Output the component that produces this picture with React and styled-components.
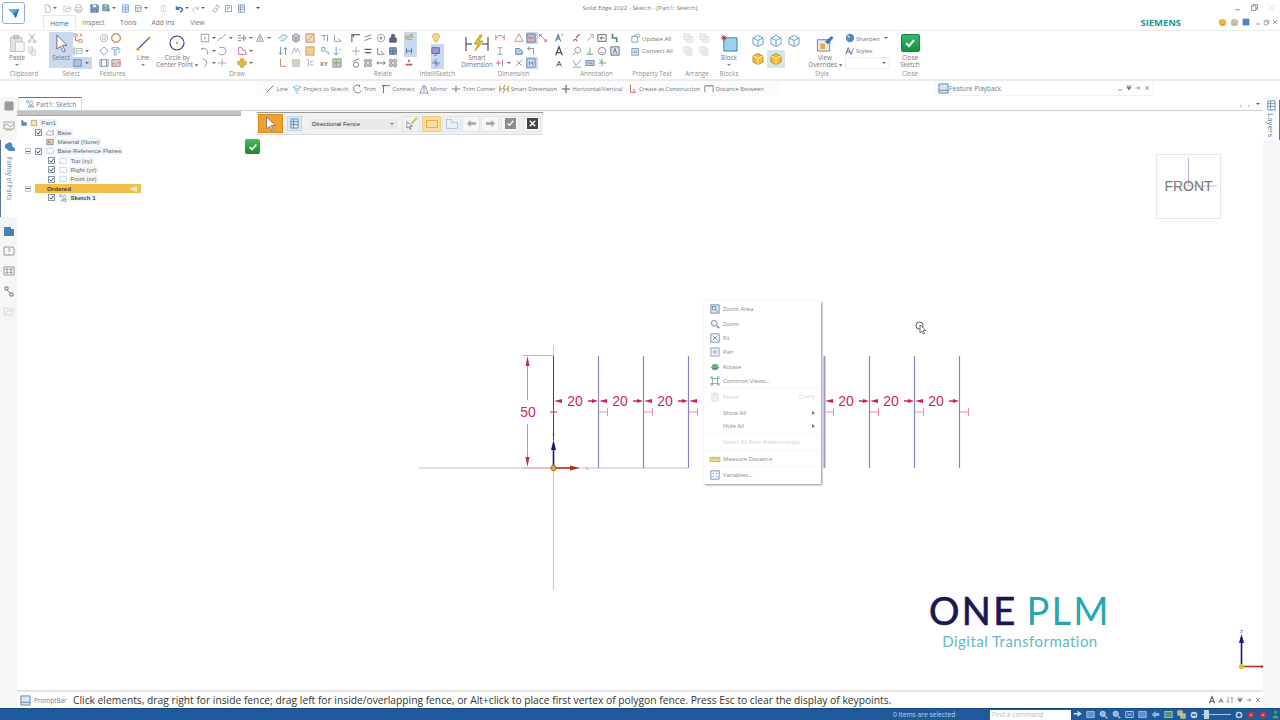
import React from "react";
import styled, { createGlobalStyle } from "styled-components";

const UI_FONT = `"Open Sans", "Liberation Sans", sans-serif`;
const PINK = "#cf1f62";

const GlobalStyle = createGlobalStyle`
  html, body { margin: 0; padding: 0; background: #fff; }
  body { font-family: ${UI_FONT}; color: #777; }
  #root { width: 1280px; height: 720px; overflow: hidden; }
`;

/* tiny CAD style icons, all on a 12x12 grid */
const GLYPHS = {
  doc: <path d="M3 1h4l3 3v7H3zM7 1v3h3" stroke="#aaa" fill="#fff" />,
  open: <path d="M1 10V3h3l1 1h5v2H4l-2 4h7l2-4" stroke="#bbb" />,
  print: <path d="M3 5V1h6v4M1 5h10v4H1zM3 8h6v3H3z" stroke="#aaa" />,
  save: <path d="M1 1h9l1 1v9H1zM3 1v4h6V1M3 11V7h6v4" stroke="#2f5d9b" fill="#6f94c6" />,
  saveas: <path d="M1 1h7l1 1v7H1zM3 1v3h4V1M7 8h4M9 6v4" stroke="#2f6d6b" fill="#7f9fc6" />,
  panel: <path d="M2 1h8v10H2zM2 4h8M2 7h8M6 4v7" stroke="#5b8fc7" fill="#dbe8f5" />,
  sheet: <path d="M2 2h7v8H2zM2 5h7M5 5v5M10 4l1 1-1 1" stroke="#6b7f96" />,
  faded: <path d="M3 2h6v8H3zM6 2v8" stroke="#ccc" />,
  undo: <path d="M2 3v4h4M2 7c2-3 6-3 8 0 0 2-1 3-3 4" stroke="#1f63ad" strokeWidth="2" />,
  redo: <path d="M10 3v4H6M10 7C8 4 4 4 2 7c0 2 1 3 3 4" stroke="#aaa" />,
  link: <path d="M2 9l4-4 3 3-4 3zM6 4l2-3 3 3-2 2" stroke="#777" />,
  note: <path d="M2 2h8v8H2zM4 8l4-4M4 5h2" stroke="#4d7fb5" />,
  table: <path d="M2 1h8v10H2zM2 4h8M2 7h8M5 1v10" stroke="#527aa5" />,
  scissors: <path d="M3 1l5 7M9 1L4 8M3 8.5a1.5 1.5 0 1 0 .1 0M9 8.5a1.5 1.5 0 1 0 .1 0" stroke="#888" />,
  copy: <path d="M2 1h5v7H2zM5 4h5v7H5z" stroke="#c4c4c4" fill="#eee" />,
  tree: <path d="M1 1h4v3H1zM7 8h4v3H7zM3 4v5h4M8 1l3 3M11 1L8 4" stroke="#c9623d" />,
  hatch: <path d="M1 2h1v8H1zM4 3h7v6H4zM4 6h7" stroke="#98a4b0" />,
  fence: <path d="M1 2h9v8H1z" stroke="#5f7795" fill="#a9bedb" />,
  ring: <><circle cx="6" cy="6" r="4.5" stroke="#aaa" /><circle cx="6" cy="6" r="2" stroke="#aaa" /></>,
  gear: <path d="M4 1h4l3 3v4l-3 3H4L1 8V4z" stroke="#b87333" strokeWidth="1.4" />,
  diamond: <path d="M6 1l5 5-5 5-5-5z" stroke="#6b8099" />,
  text: <path d="M1 2h8v2H6v7H4V4H1zM9 2l2 2-2 5" stroke="#6696bf" />,
  frame: <path d="M1 2h10v8H1zM3 2v8M9 2v8" stroke="#5a7796" />,
  photo: <path d="M1 2h10v8H1z M1 8l3-2 2 2 3-3 2 2" stroke="#b5543a" fill="#c9d7e6" />,
  rect: <path d="M1.5 1.5h9v9h-9zM6 5v2M5 6h2" stroke="#6b7f96" />,
  curve: <path d="M1 10c2-7 3-1 5-4s3-4 5-4" stroke="#6b7f96" />,
  slot: <path d="M1 6h7M1 3h4M1 9h4M8 2v8M8 4l3 2-3 2" stroke="#5b6f8a" />,
  mirror: <path d="M6 1v10M5 3L2 10h3M7 3l3 7H7" stroke="#687a8f" />,
  arcL: <path d="M2 3c5-1 8 2 7 7M2 3v2" stroke="#5c6a7a" />,
  circle: <path d="M3 2c6-2 9 2 7 6s-7 3-8 0" stroke="#5c6a7a" />,
  shape: <path d="M2 10V2h4l1 3h3l1 5z" stroke="#c2417c" />,
  arcR: <path d="M3 1c5 1 7 6 2 10" stroke="#5c6a7a" />,
  plus: <path d="M6 1v10M1 6h10" stroke="#8a96a3" />,
  cross: <path d="M4 1h4v3h3v4H8v3H4V8H1V4h3z" fill="#e0ac23" stroke="#c38d16" />,
  lens: <path d="M1 7c3-6 7-6 10-3-2 5-6 6-8 5" stroke="#5c9fc7" fill="#d9e8f2" />,
  cube: <path d="M2 3l4-2 4 2v6l-4 2-4-2zM2 3l4 2 4-2M6 5v6" stroke="#5d81a8" fill="#e2a5a0" />,
  trace: <path d="M1 1h10v10H1z M3 9l6-6" stroke="#c9623d" fill="#ecd9a5" />,
  arrows: <path d="M3 1v9M1 8l2 2 2-2M9 11V2M7 4l2-2 2 2" stroke="#3d6b99" />,
  wave: <path d="M1 10l3-8 2 5 2-4 3 7" stroke="#8a9aa8" />,
  solid: <path d="M1 1h10v10H1z" stroke="#c98b3a" fill="#f0c684" />,
  bend: <path d="M3 1v9h7" stroke="#c9623d" />,
  square: <path d="M2 2h8v8H2z" stroke="#aaa" fill="#d9cdbc" />,
  bars: <path d="M2 2h2v8M6 4h4M6 8h4" stroke="#999" />,
  sideH: <path d="M2 3h5M5 3v6M9 2v8" stroke="#4b7ba8" />,
  elbow: <path d="M3 2v8h8M7 6l4 4" stroke="#5f87ae" />,
  hook: <path d="M2 2h4v4H2zM7 7h3v3" stroke="#6f7d8c" />,
  dArrow: <path d="M5 1v10M2 8l3 3 3-3M9 4h2" stroke="#4b7ba8" />,
  xy: <text x="0" y="9" fontSize="7" fontWeight="700" fill="#555" fontFamily="Liberation Sans">XY</text>,
  grid: <path d="M1 1h10v10H1zM5 1v10M1 6h10" stroke="#8b8f3a" fill="#a8c4e0" />,
  corner: <path d="M1 11V2h10M3 2v3" stroke="#555" strokeWidth="1.4" />,
  slash: <path d="M2 5l8-3M2 9l8-3" stroke="#555" />,
  target: <><circle cx="6" cy="6" r="4.5" stroke="#888" /><circle cx="6" cy="6" r="1.8" fill="#888" /></>,
  lock: <path d="M2 6h8v5H2zM4 6V3c0-2 4-2 4 0v3" stroke="#3a4a60" fill="#3a4a60" />,
  dots: <path d="M2 4h3v3H2zM7 2h3v3H7zM5 8h5" stroke="#b08a2c" />,
  equal: <path d="M2 4h8M2 8h8" stroke="#444" strokeWidth="1.5" />,
  angle: <path d="M2 2v8h8M6 6l3 3" stroke="#4f6276" />,
  block3: <path d="M2 2h8v8H2zM2 6h8M6 2v8" stroke="#2e5077" fill="#6f8eac" />,
  tangent: <><circle cx="6" cy="8" r="3" stroke="#555" /><path d="M2 4l7-3" stroke="#555" /></>,
  sym: <path d="M2 2h3v3H2zM7 2h3v3H7zM2 7h3v3H2zM7 7h3v3H7z" stroke="#555" />,
  arrowH: <path d="M1 6h10M3 4L1 6l2 2M9 4l2 2-2 2" stroke="#444" />,
  tie: <path d="M3 3v6M9 3v6M3 6h6" stroke="#2a4d78" />,
  pins: <path d="M2 8h8M6 2v3" stroke="#c23c3c" strokeWidth="2" />,
  bulb: <path d="M6 1a3 3 0 0 1 2 6v2H4V7a3 3 0 0 1 2-6zM4 11h4" stroke="#c49a1c" fill="#f3d777" />,
  monitor: <path d="M1 2h9v7H1zM4 11h3" stroke="#3f3f8f" fill="#8e8fd2" />,
  snap: <path d="M6 1v10M1 6h10M3 3l6 6" stroke="#3d6d9e" />,
  span: <path d="M1 2v7M11 2v7M1 5h3M8 5h3M4 3h4" stroke="#c2417c" />,
  tri: <path d="M6 1l5 9H1z" stroke="#c06060" />,
  dimBox: <path d="M1 1h10v10H1zM3 6h6" stroke="#4d6f96" fill="#d6a7b8" />,
  dimLink: <path d="M2 2l8 8M2 5v-3h3M7 10h3V7" stroke="#c2417c" />,
  dimTree: <path d="M3 2h6M6 2v8M3 10h6" stroke="#6b87a6" />,
  dimSheet: <path d="M2 10V3h5l3 3v4z" stroke="#3b6ea5" fill="#a8c4e0" />,
  dimBack: <path d="M2 3h7v7M5 6L2 3l3-3" stroke="#667" />,
  dimPlus: <path d="M1 6h6M4 3v6M9 2v8" stroke="#c2417c" />,
  dimSlash: <path d="M2 10l8-8M3 3l6 6" stroke="#778" />,
  dimTab: <path d="M1 1h10v10H1zM4 4v5M8 4v5M4 6h4" stroke="#3f6ea8" fill="#cfdff2" />,
  textA: <path d="M2 10l3-8 3 8M3 7h4M9 2h2" stroke="#2f5f93" strokeWidth="1.3" />,
  textB: <path d="M2 11l4-10 4 10M3 8h6" stroke="#333" strokeWidth="1.6" />,
  textC: <path d="M3 10l3-6 3 6M4 8h4" stroke="#444" strokeWidth="1.2" />,
  annA: <path d="M2 10c0-3 4-3 4 0M9 1L5 6" stroke="#b2213e" strokeWidth="1.4" />,
  annB: <path d="M3 9l5-5M6 2h4v4" stroke="#6b7f96" />,
  annC: <path d="M1 2h10v8H1zM3 6h6M6 4l-2 2 2 2" stroke="#333" />,
  annD: <path d="M3 1v5h5v5" stroke="#2e7d52" strokeWidth="2" />,
  annE: <><circle cx="7" cy="5" r="3.5" stroke="#6b7f96" /><path d="M1 11l3-3" stroke="#6b7f96" /></>,
  annF: <path d="M2 10h8M6 2v6M3 7l3 3" stroke="#3a7d44" />,
  annG: <><circle cx="6" cy="6" r="4.5" stroke="#c2417c" /><path d="M3 8h6" stroke="#5b7" /></>,
  annH: <path d="M1 1h10v10H1zM4 9l2-6 2 6" stroke="#345" fill="#d5e2f0" />,
  annI: <path d="M1 3l4 6 6-7M1 11h10" stroke="#6b8099" />,
  annJ: <path d="M1 3h10v6H1zM3 6h6" stroke="#668" fill="#b8c8de" />,
  annK: <path d="M2 6h9M6 1v9M3 2l3 4" stroke="#3c8f50" />,
  update: <path d="M1 4h7v7H1zM3 4l5-3 3 2-3 3" stroke="#5a7ea6" />,
  convert: <path d="M1 3h8v8H1zM3 6h4M3 8h4" stroke="#5a7ea6" fill="#dbe5ef" />,
  ghost: <path d="M1 1h7v7H1zM4 4h7v7H4z" stroke="#d3d3d3" fill="#f1f1f1" />,
  sharpen: <><circle cx="6" cy="6" r="5" fill="#3f74b3" /><circle cx="4.5" cy="4.5" r="1.5" fill="#a8c8ea" /></>,
  styles: <path d="M1 10l3-8 3 8M2 7h4M8 10c0-6 3-7 3-7" stroke="#2f5f93" strokeWidth="1.2" />,
  line: <path d="M2 10l8-8" stroke="#444" />,
  project: <path d="M1 4l5-2 5 2-5 2zM3 7l3 1 3-1M4 10l2 1 2-1" stroke="#76a4c4" />,
  trim: <path d="M9 2C5 0 1 3 2 7s7 5 9 1M9 1v3" stroke="#556" />,
  connect: <path d="M3 11V2h8M1 2h4" stroke="#444" />,
  mirrorTall: <path d="M6 1v10M5 2L1 11h4M7 2l4 9H7" stroke="#7a5c9a" />,
  trimCorner: <path d="M1 6h10M6 2v8" stroke="#555" />,
  smart: <path d="M1 2v8M11 2v8M1 6h3M8 6h3M7 1L5 6h2L5 11" stroke="#8a6d12" />,
  hv: <path d="M6 1v10M1 6h10" stroke="#2c3f6e" strokeWidth="1.2" />,
  construct: <path d="M3 1v9h6M6 6l3 4" stroke="#b3402f" />,
  distance: <path d="M1 10V2h10v8M4 3h1M7 3h1" stroke="#4a5f84" />,
  railA: <path d="M2 2h8v8H2z" fill="#8c8c8c" stroke="#888" />,
  railB: <path d="M1 2h10v7H1zM3 10h6M1 6l3-2 3 3 4-3" stroke="#999" />,
  parts: <path d="M6 1l3 2v3l3 2v3H6L3 9 1 7V4l2-1 3-2z" fill="#2f74b8" />,
  folderBlue: <path d="M1 2h7v9H1zM8 4h3v7H8z" fill="#2f6ba8" />,
  railQ: <path d="M1 2h9l1 1v7H1zM5 4c2-1 3 1 1 2v1M6 9v1" stroke="#888" />,
  railGrid: <path d="M1 2h10v8H1zM3 4h2v1H3zM7 4h2v1H7zM3 7h2v1H3zM7 7h2v1H7z" stroke="#888" />,
  railFlow: <path d="M2 2h3v3H2zM7 8h3v3H7zM4 5l3 3" stroke="#667" />,
  railOpen: <path d="M1 10V3h3l1 1h5v2H4l-2 4h7l2-4" stroke="#d3d3d3" />,
  zoomArea: <path d="M1 1h10v10H1zM3 3h4v4H3zM7 7l3 3" stroke="#4b6b94" fill="#dbe6f3" />,
  zoom: <><circle cx="5" cy="5" r="3.5" stroke="#5a7ea6" fill="#dde8f4" /><path d="M8 8l3 3" stroke="#666" strokeWidth="1.6" /></>,
  fit: <path d="M1 1h10v10H1zM3 3l6 6M9 3l-6 6" stroke="#4b6b94" />,
  pan: <path d="M1 1h10v10H1zM6 3v6M3 6h6" stroke="#7c8fa6" fill="#e8ecf2" />,
  rotate: <><circle cx="6" cy="6" r="4" fill="#58a064" /><path d="M1 6c2 3 8 3 10 0" stroke="#2d6e3b" /></>,
  views: <path d="M3 3h6v6H3zM1 1h2v2H1zM9 1h2v2H9zM1 9h2v2H1zM9 9h2v2H9z" stroke="#5f9e80" />,
  pasteOff: <path d="M2 2h8v9H2zM4 1h4v2H4z" stroke="#ddd" fill="#eee" />,
  measure: <path d="M0 4h12v5H0zM3 4v2M6 4v2M9 4v2" stroke="#c9a227" fill="#eed47a" />,
  variables: <path d="M1 1h10v10H1zM3 4h2M7 4h2M3 8h2M7 8h2" stroke="#3f6ea8" />,
  statArrow: <path d="M1 5h7M6 2l4 3-4 3" stroke="#fff" strokeWidth="2" />,
  statSheet: <path d="M1 2h10v8H1z" stroke="#cfe0f3" fill="#6d9bcf" />,
  statZoom: <><circle cx="5" cy="5" r="3.5" stroke="#fff" fill="#9fc1e6" /><path d="M8 8l3 3" stroke="#e6c9a0" strokeWidth="2" /></>,
  statFit: <path d="M1 2h10v8H1zM3 4l6 4M9 4L3 8" stroke="#fff" />,
  statBlue: <path d="M1 6l5-5v3h5v4H6v3z" fill="#9bc6ee" />,
  statGreen: <path d="M1 2h10v8H1z" fill="#5aa35e" stroke="#cfe0f3" />,
  statYellow: <path d="M1 1h6v6H1z M5 5h6v6H5z" fill="#f2c23c" stroke="#cfe0f3" />,
  statMinus: <><circle cx="6" cy="6" r="5" fill="#dfe9f4" /><path d="M3 6h6" stroke="#345" strokeWidth="2" /></>,
  statPlus: <><circle cx="6" cy="6" r="5" fill="#dfe9f4" /><path d="M3 6h6M6 3v6" stroke="#345" strokeWidth="2" /></>,
  statRecord: <><circle cx="6" cy="6" r="5" fill="#d92b2b" /><circle cx="6" cy="6" r="2" fill="#f08a8a" /></>,
  statPerson: <path d="M6 1a2 2 0 1 1-.1 0M2 11c0-5 8-5 8 0z" fill="#63b35a" />,
  smile: <><circle cx="6" cy="6" r="5" fill="#f2b233" /><path d="M3.5 7.5c1 1.5 4 1.5 5 0M4 4v1M8 4v1" stroke="#8a5a10" /></>,
  frown: <><circle cx="6" cy="6" r="5" fill="#c9bdb0" /><path d="M3.5 9c1-1.5 4-1.5 5 0M4 4v1M8 4v1" stroke="#7a6a5a" /></>,
  help: <path d="M1 1h10v10H1z" fill="#2f6fb5" />,
  min: <path d="M3 9h6" stroke="#666" strokeWidth="1.2" />,
  restore: <path d="M2 4h6v6H2zM4 4V2h6v6H8" stroke="#666" />,
  close: <path d="M3 3l6 6M9 3l-6 6" stroke="#666" strokeWidth="1.1" />,
  closeOff: <path d="M2 2l8 8M10 2l-8 8" stroke="#ccc" />,
  pin: <path d="M2 6h5M7 3v6M7 6h3" stroke="#666" />,
  list: <path d="M2 3h8M6 9L3 5h6z" stroke="#555" fill="#555" />,
  play: <path d="M1 1h10v10H1zM1 8h10" stroke="#4b6b94" fill="#cfe0f3" />,
  checkBig: <path d="M2 6l3 3 5-6" stroke="#fff" strokeWidth="2.2" />,
  tabSketch: <path d="M1 1h3v3H1zM7 8h4v3H7zM8 1l3 3-6 6-2 1 1-2z" stroke="#3f7ab5" />,
  partBlue: <path d="M2 2h3v8H2zM5 5h5v5H5z" fill="#2f74b8" />,
  partOrange: <path d="M2 2h8v8H2z" stroke="#b87333" fill="#f2dcb5" />,
  plane: <path d="M1 2h10v8H1zM3 8h2" stroke="#a9bccf" />,
  material: <path d="M1 2h10v8H1zM3 5h3M3 7h5" stroke="#4b6b94" fill="#e7c58a" />,
  sketchA: <path d="M1 5l4-3 2 3 4-3v7H1z" stroke="#7a5c9a" />,
};

const IconSvg = styled.svg`
  flex: none;
  display: block;
  fill: none;
  overflow: visible;
  opacity: 0.85;
`;

const Glyph = ({ name, size = 10 }) => (
  <IconSvg viewBox="0 0 12 12" width={size} height={size} aria-hidden="true">
    {GLYPHS[name]}
  </IconSvg>
);

const Caret = styled.i`
  flex: none;
  width: 0;
  height: 0;
  border: 2px solid transparent;
  border-top: 2.5px solid ${(p) => p.$color || "#666"};
  border-bottom: 0;
  margin-top: ${(p) => p.$mt || 0}px;
  margin-left: ${(p) => p.$ml || 0}px;
`;

/* ---- title bar ---- */
const Page = styled.div`
  width: 1280px;
  height: 720px;
  display: flex;
  flex-direction: column;
  overflow: hidden;
  background: #fff;
`;

const TopBar = styled.header`
  flex: none;
  height: 30px;
  display: grid;
  grid-template-columns: 1fr auto 1fr;
`;

const TopLeft = styled.div`
  display: flex;
  padding: 2px 0 0 2px;
`;

const AppButton = styled.button`
  width: 23px;
  height: 22px;
  padding: 0;
  display: flex;
  align-items: center;
  justify-content: center;
  background: #fff;
  border: 1px solid #8fb2cd;
  border-radius: 3px;
`;

const TopStack = styled.div`
  display: flex;
  flex-direction: column;
`;

const QuickBar = styled.div`
  height: 12px;
  display: flex;
  align-items: center;
  margin: 0 0 0 18px;
`;

const QuickItem = styled.span`
  display: inline-flex;
  align-items: center;
  gap: 1px;
  margin-right: ${(p) => p.$gap}px;
`;

const TabRow = styled.nav`
  flex: 1;
  display: flex;
  align-items: flex-end;
  margin-left: 18px;
`;

const RibbonTab = styled.span`
  height: 15px;
  width: ${(p) => p.$w}px;
  font-size: 6.6px;
  line-height: 15px;
  text-align: center;
  color: ${(p) => (p.$active ? "#4a6a8a" : "#777")};
  box-sizing: border-box;
  ${(p) => p.$active && "border: 1px solid #e8e8e8; border-bottom: 0; background: #fff;"}
`;

const Title = styled.div`
  font-size: 6.1px;
  line-height: 16px;
  color: #777;
`;

const TopRight = styled.div`
  display: flex;
  flex-direction: column;
  align-items: flex-end;
`;

const WindowControls = styled.div`
  height: 15px;
  display: flex;
  align-items: center;
  gap: 8px;
  padding-right: 4px;
`;

const BrandRow = styled.div`
  display: flex;
  align-items: center;
  height: 14px;
  padding-right: 1px;
`;

const Siemens = styled.span`
  font-family: "Open Sans", sans-serif;
  font-weight: 700;
  font-size: 9.4px;
  color: #14999b;
  margin-right: 37px;
`;

const MiniControls = styled.div`
  display: flex;
  align-items: center;
  gap: 1px;
  margin-left: 4px;
`;

const Faces = styled.div`
  display: flex;
  gap: 3px;
`;

/* ---- ribbon ---- */
const Ribbon = styled.section`
  flex: none;
  height: 51px;
  display: flex;
  border-top: 1px solid #ececec;
  border-bottom: 2px solid #ececec;
  box-sizing: border-box;
`;

const Group = styled.div`
  flex: none;
  width: ${(p) => p.$w}px;
  display: flex;
  flex-direction: column;
  box-sizing: border-box;
`;

const GroupBody = styled.div`
  height: 37px;
  display: flex;
  padding: 1px 0 0 ${(p) => p.$pl || 0}px;
`;

const GroupLabel = styled.div`
  font-size: 6.3px;
  line-height: 10px;
  text-align: center;
  color: #8f8f8f;
  transform: translateX(${(p) => p.$dx || 0}px);
`;

const BigTool = styled.div`
  flex: none;
  width: ${(p) => p.$w}px;
  height: 36px;
  margin-left: ${(p) => p.$ml || 0}px;
  display: flex;
  flex-direction: column;
  align-items: center;
  font-size: 6.3px;
  line-height: 7.2px;
  text-align: center;
  color: #777;
  white-space: nowrap;
  background: ${(p) => (p.$on ? "#c9daee" : "transparent")};
`;

const BigIcon = styled.div`
  height: 22px;
  display: flex;
  align-items: center;
  justify-content: center;
  flex: none;
`;

const ToolGrid = styled.div`
  flex: none;
  display: grid;
  grid-template-columns: ${(p) => p.$cols};
  grid-auto-rows: 12.4px;
  margin-left: ${(p) => p.$ml || 0}px;
`;

const Cell = styled.span`
  display: flex;
  align-items: center;
  gap: 2px;
  ${(p) => p.$center && "justify-content: center;"}
  background: ${(p) => (p.$on ? "#c9daee" : "transparent")};
  min-width: 0;
`;

const Tools = ({ cols, ml, items, center }) => (
  <ToolGrid $cols={cols} $ml={ml}>
    {items.map((it, i) => {
      const [name, mods = ""] = it ? it.split(":") : [];
      return (
        <Cell key={i} $on={mods.includes("on")} $center={center}>
          {name && <Glyph name={name} />}
          {mods.includes("v") && <Caret />}
        </Cell>
      );
    })}
  </ToolGrid>
);

const TextTool = styled.div`
  height: 12.4px;
  display: flex;
  align-items: center;
  gap: 1px;
  font-size: 6.1px;
  color: #777;
  white-space: nowrap;
`;

const TextStack = styled.div`
  flex: none;
  display: flex;
  flex-direction: column;
`;

const ComboBox = styled.div`
  width: 45px;
  height: 12px;
  display: flex;
  align-items: center;
  justify-content: flex-end;
  padding-right: 3px;
  box-sizing: border-box;
  border: 1px solid #eee;
`;

const StyleCubes = styled.div`
  flex: none;
  display: grid;
  grid-template-columns: 18px 18px 18px;
  grid-template-rows: 18px 18px;
  margin-left: 3px;
`;

const CubeCell = styled.span`
  display: flex;
  align-items: center;
  justify-content: center;
  background: ${(p) => (p.$on ? "#d6e3f1" : "transparent")};
`;

const CubeIcon = ({ solid }) => (
  <svg viewBox="0 0 14 14" width="14" height="14" aria-hidden="true">
    <path
      d="M2 4l5-2.5L12 4v6l-5 2.5L2 10z"
      fill={solid ? "#efbd33" : "none"}
      stroke={solid ? "#c48f16" : "#6f9bc4"}
    />
    <path d="M2 4l5 2.5L12 4M7 6.5v6" fill="none" stroke={solid ? "#fff2b8" : "#6f9bc4"} />
  </svg>
);

const CloseSquare = styled.div`
  width: 19px;
  height: 18px;
  display: flex;
  align-items: center;
  justify-content: center;
  border-radius: 2px;
  background: linear-gradient(#37b86b, #15913f);
  border: 1px solid #1e7f3f;
  box-sizing: border-box;
`;

/* ---- command row ---- */
const CommandRow = styled.div`
  flex: none;
  height: 16px;
  display: flex;
  align-items: flex-start;
`;

const CommandBar = styled.div`
  width: 523px;
  height: 15px;
  margin-left: 257px;
  padding-left: 8px;
  box-sizing: border-box;
  display: flex;
  align-items: center;
  background: #fbfbfb;
`;

const Command = styled.span`
  display: inline-flex;
  align-items: center;
  gap: 1.5px;
  margin-right: ${(p) => p.$gap || 4}px;
  font-size: 5.75px;
  color: #777;
  white-space: nowrap;
`;

const PlaybackPanel = styled.div`
  width: 220px;
  height: 15px;
  margin-left: 154px;
  padding: 0 2px 0 3px;
  box-sizing: border-box;
  display: flex;
  align-items: center;
  border: 1px solid #f1f1f1;
  border-top: 0;
  font-size: 6.6px;
  color: #5f7d9c;
`;

const PanelButtons = styled.div`
  margin-left: auto;
  display: flex;
  gap: 1px;
`;

/* ---- workspace ---- */
const Workspace = styled.main`
  flex: 1;
  min-height: 0;
  display: flex;
`;

const SideRail = styled.aside`
  flex: none;
  width: ${(p) => p.$w}px;
  background: #f6f6f6;
  display: flex;
  flex-direction: column;
  align-items: center;
  gap: 8px;
  padding-top: 3px;
  box-sizing: border-box;
`;

const RailTab = styled.div`
  align-self: stretch;
  display: flex;
  flex-direction: column;
  align-items: center;
  gap: ${(p) => p.$gap}px;
  padding: ${(p) => p.$pad};
  background: #fff;
  ${(p) => p.$side}: 1px solid #587696;
`;

const VerticalLabel = styled.span`
  writing-mode: vertical-rl;
  font-size: ${(p) => p.$size}px;
  line-height: 8px;
  color: #5f7d9c;
`;

const Center = styled.div`
  flex: 1;
  min-width: 0;
  display: flex;
  flex-direction: column;
`;

const DocTabs = styled.div`
  flex: none;
  height: 14px;
  display: flex;
  align-items: flex-end;
  border-bottom: 1px solid #c8d4dd;
  box-sizing: border-box;
`;

const DocTab = styled.div`
  width: 64px;
  height: 13px;
  margin-left: 1px;
  display: flex;
  align-items: center;
  gap: 2px;
  padding-left: 7px;
  box-sizing: border-box;
  border-top: 1px solid #5a7898;
  border-left: 1px solid #dde;
  border-right: 1px solid #dde;
  font-size: 6.6px;
  color: #627d98;
  white-space: nowrap;
`;

const DocArrows = styled.div`
  margin-left: auto;
  margin-right: 3px;
  height: 12px;
  display: flex;
  align-items: center;
  gap: 6px;
  color: #999;
  font-size: 8px;
`;

const Canvas = styled.div`
  flex: 1;
  min-height: 0;
  display: flex;
`;

const TreePanel = styled.div`
  flex: none;
  width: 224px;
  display: flex;
  flex-direction: column;
`;

const TreeHandle = styled.div`
  height: 5px;
  background: #c4c4c4;
  border-bottom: 1px solid #a9a9a9;
  box-sizing: border-box;
`;

const TreeList = styled.ul`
  list-style: none;
  margin: 2.5px 0 0;
  padding: 0;
`;

const TreeRow = styled.li`
  height: 9.35px;
  display: flex;
  align-items: center;
  gap: 2px;
  padding-left: ${(p) => p.$indent}px;
`;

const Expander = styled.span`
  flex: none;
  width: 6px;
  height: 6px;
  margin-right: 2px;
  border: 1px solid #c5c5c5;
  box-sizing: border-box;
  display: flex;
  align-items: center;
  justify-content: center;
  &::before {
    content: "";
    width: 4px;
    height: 1px;
    background: #666;
  }
`;

const CheckBox = styled.span`
  flex: none;
  width: 7px;
  height: 7px;
  border: 1px solid #8a97a6;
  box-sizing: border-box;
  background: #fff;
  display: flex;
  align-items: center;
  justify-content: center;
  margin-right: 2px;
`;

const TreeText = styled.span`
  font-family: "Liberation Sans", sans-serif;
  font-size: 6.1px;
  line-height: 8px;
  padding: 0 1.5px;
  white-space: nowrap;
  color: ${(p) => (p.$bold ? "#444" : "#666")};
  font-weight: ${(p) => (p.$bold ? 700 : 400)};
  background: #f3f6f9;
`;

const OrderedBand = styled.div`
  width: 106px;
  height: 9px;
  display: flex;
  align-items: center;
  justify-content: space-between;
  padding: 0 4px 0 12px;
  box-sizing: border-box;
  background: #f3bf4b;
  font-family: "Liberation Sans", sans-serif;
  font-weight: 700;
  font-size: 6.2px;
  color: #4a3a12;
  &::after {
    content: "";
    border: 3px solid transparent;
    border-left: 0;
    border-right: 8px solid #fbe7b0;
  }
`;

const Drawing = styled.div`
  flex: 1;
  min-width: 0;
  position: relative;
`;

const FloatBar = styled.div`
  position: absolute;
  left: 16px;
  top: 1px;
  width: 286px;
  height: 23px;
  padding: 2px 1px;
  box-sizing: border-box;
  display: flex;
  align-items: center;
  gap: 1px;
  background: #f1f1f1;
  border-top: 1px solid #9a9a9a;
  border-bottom: 1px solid #ddd;
  z-index: 2;
`;

const BarButton = styled.span`
  flex: none;
  width: ${(p) => p.$w || 15}px;
  height: ${(p) => p.$h || 15}px;
  margin-left: ${(p) => p.$ml || 0}px;
  display: flex;
  align-items: center;
  justify-content: center;
  box-sizing: border-box;
  background: ${(p) => p.$bg || "#f7f7f7"};
  border: 1px solid ${(p) => p.$line || "#e4e4e4"};
`;

const FenceSelect = styled.div`
  flex: none;
  width: 88px;
  height: 10px;
  margin-left: 7px;
  display: flex;
  align-items: center;
  justify-content: space-between;
  padding: 0 4px 0 2px;
  box-sizing: border-box;
  background: #e9e9e9;
  font-family: "Liberation Sans", sans-serif;
  font-size: 6.2px;
  color: #333;
`;

const AcceptBadge = styled.div`
  position: absolute;
  left: 4px;
  top: 28px;
  width: 15px;
  height: 15px;
  display: flex;
  align-items: center;
  justify-content: center;
  border-radius: 2px;
  background: linear-gradient(#4bbb55, #22832c);
`;

const SketchArt = styled.svg`
  position: absolute;
  left: 159px;
  top: 229px;
`;

const ContextMenu = styled.ul`
  position: absolute;
  left: 463px;
  top: 190px;
  width: 117px;
  height: 183px;
  margin: 0;
  padding: 1px 0 0;
  list-style: none;
  box-sizing: border-box;
  background: #fff;
  box-shadow: 1px 1px 2px rgba(0, 0, 0, 0.45);
  z-index: 2;
`;

const MenuRow = styled.li`
  height: ${(p) => p.$h || 14.4}px;
  display: flex;
  align-items: center;
  font-size: 5.9px;
  color: ${(p) => (p.$off ? "#cfcfcf" : "#888")};
  padding-right: 6px;
  white-space: nowrap;
  ${(p) => p.$rule && "border-bottom: 1px solid #f6f6f6;"}
  box-sizing: border-box;
`;

const MenuIcon = styled.span`
  flex: none;
  width: 19px;
  padding-left: 2px;
  display: flex;
  justify-content: center;
  box-sizing: border-box;
`;

const MenuHint = styled.span`
  margin-left: auto;
`;

const MenuArrow = styled.i`
  margin-left: auto;
  width: 0;
  height: 0;
  border: 2.5px solid transparent;
  border-left: 3px solid #777;
  border-right: 0;
`;

const Pointer = styled.svg`
  position: absolute;
  left: 674px;
  top: 210px;
`;

const ViewCube = styled.svg`
  position: absolute;
  left: 915px;
  top: 43px;
`;

const Logo = styled.div`
  position: absolute;
  left: 688px;
  top: 478px;
  width: 182px;
  text-align: center;
  font-family: Lato, "Open Sans", sans-serif;
`;

const LogoMark = styled.div`
  font-size: 38px;
  line-height: 43px;
  letter-spacing: 2.3px;
  white-space: nowrap;
  color: #1c1656;
  font-weight: 400;
  -webkit-text-stroke: 0.7px #1c1656;
  span {
    color: #25a7b3;
    margin-left: 9px;
    -webkit-text-stroke: 0;
  }
`;

const LogoTag = styled.div`
  margin-top: 0;
  font-size: 15px;
  line-height: 18px;
  letter-spacing: 0.45px;
  color: #66b8c2;
`;

const Triad = styled.svg`
  position: absolute;
  left: 988px;
  top: 518px;
`;

/* ---- prompt + status ---- */
const PromptBar = styled.div`
  flex: none;
  height: 18px;
  display: flex;
  align-items: center;
  border-top: 2px solid #e4e4e4;
  box-sizing: border-box;
  padding: 0 1px 0 3px;
`;

const PromptTag = styled.span`
  display: inline-flex;
  align-items: center;
  gap: 3px;
  font-size: 6.4px;
  color: #5f7d9c;
  width: 53px;
  flex: none;
`;

const PromptText = styled.span`
  font-size: 10.25px;
  color: #333;
  white-space: nowrap;
`;

const PromptTools = styled.div`
  margin-left: auto;
  display: flex;
  align-items: center;
  gap: 1.2px;
`;

const StatusBar = styled.footer`
  flex: none;
  height: 12px;
  display: flex;
  align-items: center;
  background: #1f5b9c;
  border-top: 1px solid #16497f;
  box-sizing: border-box;
  padding-left: 893px;
`;

const StatusText = styled.span`
  font-size: 6.7px;
  color: #b9d4ef;
  white-space: nowrap;
  width: 97px;
  flex: none;
`;

const FindInput = styled.div`
  flex: none;
  width: 81px;
  height: 10px;
  margin-right: 2px;
  padding-left: 2px;
  box-sizing: border-box;
  background: #fff;
  font-size: 6.6px;
  line-height: 10px;
  color: #bbb;
`;

const StatusIcons = styled.div`
  display: flex;
  align-items: center;
  gap: 4px;
`;

const ZoomTrack = styled.span`
  flex: none;
  width: 29px;
  height: 1px;
  background: #a9c6e5;
  display: flex;
  align-items: center;
  &::before {
    content: "";
    width: 5px;
    height: 9px;
    margin-left: 2px;
    background: #bcd3ec;
  }
`;

const QUICK = [
  ["doc", 1, 6], ["open", 0, 2], ["print", 0, 7], ["save", 0, 3],
  ["saveas", 1, 5], ["panel", 0, 4], ["sheet", 1, 11], ["faded", 0, 7], ["undo", 1, 2],
  ["redo", 1, 6], ["link", 0, 4], ["note", 0, 4], ["table", 0, 10],
];

const COMMANDS = [
  ["line", "Line", 4], ["project", "Project to Sketch", 4], ["trim", "Trim", 5],
  ["connect", "Connect", 4], ["mirrorTall", "Mirror", 4], ["trimCorner", "Trim Corner", 4],
  ["smart", "Smart Dimension", 4], ["hv", "Horizontal/Vertical", 5],
  ["construct", "Create as Construction", 4], ["distance", "Distance Between", 0],
];

const MENU = [
  { icon: "zoomArea", text: "Zoom Area" },
  { icon: "zoom", text: "Zoom" },
  { icon: "fit", text: "Fit" },
  { icon: "pan", text: "Pan" },
  { icon: "rotate", text: "Rotate" },
  { icon: "views", text: "Common Views...", rule: true },
  { icon: "pasteOff", text: "Paste", hint: "Ctrl+V", off: true, h: 17 },
  { text: "Show All", more: true },
  { text: "Hide All", more: true, rule: true },
  { text: "Select All Peer Relationships", off: true, h: 17, rule: true },
  { icon: "measure", text: "Measure Distance", h: 16, rule: true },
  { icon: "variables", text: "Variables...", h: 16 },
];

const TREE = [
  { indent: 3, icons: ["partBlue", "partOrange"], text: "Part1" },
  { indent: 18, check: true, icons: ["sketchA"], text: "Base" },
  { indent: 29, icons: ["material"], text: "Material (None)" },
  { indent: 8, expand: true, check: true, icons: ["plane"], text: "Base Reference Planes" },
  { indent: 31, check: true, icons: ["plane"], text: "Top (xy)" },
  { indent: 31, check: true, icons: ["plane"], text: "Right (yz)" },
  { indent: 31, check: true, icons: ["plane"], text: "Front (xz)" },
  { indent: 8, expand: true, ordered: true },
  { indent: 31, check: true, icons: ["tabSketch"], text: "Sketch 1", bold: true },
];

const VERTICALS = [598, 643, 688, 824, 869, 914, 959];
const DIM_SPANS = [[553, 598], [598, 643], [643, 688], [824, 869], [869, 914], [914, 959]];

const Sketch = () => (
  <SketchArt viewBox="400 340 600 260" width="600" height="260" aria-hidden="true">
    <path d="M419 468H688" stroke="#cdbfd0" />
    <path d="M553.5 345V590" stroke="#c9c9c9" />
    <path d="M553.5 356V440" stroke="#444" />
    <path d="M523 355.5H553M523 468H553" stroke="#ef9fbb" />
    <path d="M527.5 362V400M527.5 424V462" stroke="#e87aa2" />
    <path d="M527.5 356l-2 10h4zM527.5 467l-2-10h4z" fill={PINK} />
    <text x="528" y="417" textAnchor="middle" fontFamily="Liberation Sans" fontSize="14" fill={PINK}>50</text>
    <path d="M550 412H557M553.5 409V415" stroke={PINK} />
    {VERTICALS.map((x) => (
      <path key={x} d={`M${x}.5 356V468`} stroke={x === 824 ? "#9a9ada" : "#8585c9"} strokeWidth={x === 824 ? 2 : 1.2} />
    ))}
    {DIM_SPANS.map(([a, b]) => (
      <g key={a}>
        <path d={`M${a + 1} 401l8-2v4z M${b} 401l-6-2v4z`} fill={PINK} />
        <path d={`M${b - 10} 401h5`} stroke={PINK} strokeWidth="1.5" />
        <text x={(a + b) / 2 - 0.5} y="406" textAnchor="middle" fontFamily="Liberation Sans" fontSize="14" fill={PINK}>20</text>
      </g>
    ))}
    <path d="M689 401l8-2v4z" fill={PINK} />
    {VERTICALS.map((x) => (
      <path key={x} d={`M${x + 1} 412h8M${x + 9}.5 408v8`} stroke="#ea8fb0" />
    ))}
    <path d="M553.5 466V447" stroke="#14148c" strokeWidth="1.6" />
    <path d="M553.5 440l-2.5 10h5z" fill="#14148c" />
    <path d="M555 468H572" stroke="#b3301f" strokeWidth="1.6" />
    <path d="M580 468l-10-2.5v5z" fill="#b3301f" />
    <text x="553.5" y="436" textAnchor="middle" fontFamily="Liberation Sans" fontSize="5" fill="#555">z</text>
    <text x="587" y="470" textAnchor="middle" fontFamily="Liberation Sans" fontSize="6" fill="#e2799f">x</text>
    <circle cx="553.5" cy="468" r="2.6" fill="#e9a93a" stroke="#b9651d" />
  </SketchArt>
);

const App = () => (
  <Page>
    <GlobalStyle />
    <TopBar>
      <TopLeft>
        <AppButton>
          <svg viewBox="0 0 16 16" width="14" height="14" aria-hidden="true">
            <path d="M1 4l13-1-4 11-3-5z" fill="#58ade6" />
            <path d="M7 9l7-6-4 11z" fill="#2a75bd" />
          </svg>
        </AppButton>
        <TopStack>
          <QuickBar>
            {QUICK.map(([name, caret, gap], i) => (
              <QuickItem key={i} $gap={gap}>
                <Glyph name={name} size={9} />
                {caret ? <Caret /> : null}
              </QuickItem>
            ))}
            <Caret $color="#444" />
          </QuickBar>
          <TabRow>
            <RibbonTab $active $w={33}>Home</RibbonTab>
            <RibbonTab $w={35}>Inspect</RibbonTab>
            <RibbonTab $w={35}>Tools</RibbonTab>
            <RibbonTab $w={34}>Add Ins</RibbonTab>
            <RibbonTab $w={35}>View</RibbonTab>
          </TabRow>
        </TopStack>
      </TopLeft>
      <Title>Solid Edge 2022 - Sketch - [Part1: Sketch]</Title>
      <TopRight>
        <WindowControls>
          <Glyph name="min" size={9} />
          <Glyph name="restore" size={9} />
          <Glyph name="closeOff" size={9} />
        </WindowControls>
        <BrandRow>
          <Siemens>SIEMENS</Siemens>
          <Faces>
            <Glyph name="smile" size={9} />
            <Glyph name="frown" size={9} />
            <Glyph name="help" size={8} />
          </Faces>
          <MiniControls>
            <Glyph name="min" size={8} />
            <Glyph name="restore" size={7} />
            <Glyph name="close" size={8} />
          </MiniControls>
        </BrandRow>
      </TopRight>
    </TopBar>

    <Ribbon>
      <Group $w={48}>
        <GroupBody $pl={7}>
          <BigTool $w={20}>
            <BigIcon>
              <svg viewBox="0 0 20 22" width="16" height="19" aria-hidden="true">
                <path d="M2 3h14v18H2z" fill="#e4e4e4" stroke="#b5b5b5" />
                <path d="M6 1h6v4H6z" fill="#cfcfcf" stroke="#aaa" />
                <path d="M8 9h11v12H8z" fill="#f7f7f7" stroke="#bbb" />
              </svg>
            </BigIcon>
            Paste
            <Caret $color="#888" $mt={3} />
          </BigTool>
          <Tools cols="16px" items={["scissors", "copy"]} />
        </GroupBody>
        <GroupLabel>Clipboard</GroupLabel>
      </Group>

      <Group $w={48}>
        <GroupBody $pl={1}>
          <BigTool $w={24} $on>
            <BigIcon>
              <svg viewBox="0 0 14 20" width="13" height="19" aria-hidden="true">
                <path d="M2 1v15l4-3 3 6 2-1-3-6h5z" fill="#fff" stroke="#666" />
              </svg>
            </BigIcon>
            Select
          </BigTool>
          <Tools cols="19px" items={["tree", "hatch:v", "fence:on,v"]} />
        </GroupBody>
        <GroupLabel $dx={-1}>Select</GroupLabel>
      </Group>

      <Group $w={33}>
        <GroupBody $pl={3}>
          <Tools cols="12px 12px" items={["ring", "gear", "diamond", "text", "frame", "photo"]} />
        </GroupBody>
        <GroupLabel>Features</GroupLabel>
      </Group>

      <Group $w={220}>
        <GroupBody $pl={4}>
          <BigTool $w={20}>
            <BigIcon>
              <svg viewBox="0 0 16 16" width="15" height="15" aria-hidden="true">
                <path d="M2 14L14 2" stroke="#3d3d8f" strokeWidth="1.3" />
                <circle cx="2" cy="14" r="1.6" fill="#e0a32a" />
                <circle cx="14" cy="2" r="1.6" fill="#e0a32a" />
              </svg>
            </BigIcon>
            Line
            <Caret $color="#888" $mt={3} />
          </BigTool>
          <BigTool $w={44} $ml={2}>
            <BigIcon>
              <svg viewBox="0 0 16 16" width="16" height="16" aria-hidden="true">
                <circle cx="8" cy="8" r="7" fill="none" stroke="#2c3f6e" strokeWidth="1.1" />
                <circle cx="8" cy="8" r="1.2" fill="#e0a32a" />
              </svg>
            </BigIcon>
            Circle by
            <br />
            Center Point ▾
          </BigTool>
          <Tools cols="17px 20px 18px 18px" ml={0.5} items={["rect:v", "curve:v", "slot:v", "mirror:v", "arcL:v", "circle", "shape:v", "", "arcR:v", "plus", "cross:v", ""]} />
          <Tools cols="13.5px 13.5px 13.5px" ml={5} items={["lens", "cube", "trace", "arrows", "wave", "solid", "bend", "square", "bars"]} />
          <Tools cols="12px 12px" ml={1.5} items={["sideH", "elbow", "hook", "dArrow", "xy", "grid"]} />
        </GroupBody>
        <GroupLabel $dx={-2}>Draw</GroupLabel>
      </Group>

      <Group $w={68}>
        <GroupBody $pl={1.5}>
          <Tools cols="12.5px 12.5px 12.5px 12.5px" items={["corner", "slash", "target", "lock", "plus", "equal", "angle", "block3", "tangent", "sym", "arrowH", "sym"]} />
          <Tools cols="13px" ml={3} items={["dots:on", "tie:on", "pins"]} />
        </GroupBody>
        <GroupLabel>Relate</GroupLabel>
      </Group>

      <Group $w={41}>
        <GroupBody $pl={14}>
          <Tools cols="13px" items={["bulb", "monitor:on", "snap:on"]} />
        </GroupBody>
        <GroupLabel>IntelliSketch</GroupLabel>
      </Group>

      <Group $w={95}>
        <GroupBody $pl={1}>
          <BigTool $w={36}>
            <BigIcon>
              <svg viewBox="0 0 24 18" width="24" height="18" aria-hidden="true">
                <path d="M1 3v14M23 3v14M1 10h6M17 10h6" stroke="#333" fill="none" />
                <path d="M15 1L9 10h4l-3 7 8-10h-4l3-6z" fill="#e8c52c" stroke="#9a7d10" strokeWidth=".6" />
              </svg>
            </BigIcon>
            Smart
            <br />
            Dimension
          </BigTool>
          <Tools cols="19px 12px 12px 12px" ml={-0.5} items={["span", "tri", "dimBox:on", "dimLink", "dimTree", "dimSheet", "dimBack", "", "dimPlus:v", "dimSlash", "dimTab:on", ""]} />
        </GroupBody>
        <GroupLabel $dx={8}>Dimension</GroupLabel>
      </Group>

      <Group $w={75}>
        <GroupBody $pl={0.5}>
          <Tools cols="12px" items={["textA", "textB", "textC"]} />
          <Tools cols="12.5px 12.5px 12.5px 12.5px" ml={6.5} items={["annA", "annB", "annC", "annD", "annE", "annF", "annG", "annH", "annI", "annJ", "annK", ""]} />
        </GroupBody>
        <GroupLabel $dx={6}>Annotation</GroupLabel>
      </Group>

      <Group $w={52}>
        <GroupBody $pl={3}>
          <TextStack>
            <TextTool><Glyph name="update" /> Update All</TextTool>
            <TextTool><Glyph name="convert" /> Convert All</TextTool>
          </TextStack>
        </GroupBody>
        <GroupLabel $dx={-2}>Property Text</GroupLabel>
      </Group>

      <Group $w={34}>
        <GroupBody $pl={0}>
          <Tools center cols="16px 16px" items={["ghost", "ghost", "ghost", "ghost"]} />
        </GroupBody>
        <GroupLabel>Arrange</GroupLabel>
      </Group>

      <Group $w={32}>
        <GroupBody>
          <BigTool $w={30}>
            <BigIcon>
              <svg viewBox="0 0 18 18" width="17" height="17" aria-hidden="true">
                <path d="M3 3h14v14H3z" fill="#9ed2ea" stroke="#2f7eb0" />
                <path d="M3 0v6M0 3h6M1 1l4 4M5 1L1 5" stroke="#c9262f" />
              </svg>
            </BigIcon>
            Block
            <Caret $color="#888" $mt={3} />
          </BigTool>
        </GroupBody>
        <GroupLabel $dx={-1}>Blocks</GroupLabel>
      </Group>

      <Group $w={148}>
        <GroupBody>
          <StyleCubes>
            <CubeCell><CubeIcon /></CubeCell>
            <CubeCell><CubeIcon /></CubeCell>
            <CubeCell><CubeIcon /></CubeCell>
            <CubeCell><CubeIcon solid /></CubeCell>
            <CubeCell $on><CubeIcon solid /></CubeCell>
            <CubeCell />
          </StyleCubes>
          <BigTool $w={40} $ml={2}>
            <BigIcon>
              <svg viewBox="0 0 20 18" width="20" height="17" aria-hidden="true">
                <path d="M2 5h13v12H2z" fill="#e9edf2" stroke="#6c7f95" />
                <path d="M5 9h5v6H5z" fill="#e6a94a" />
                <path d="M10 7L17 1l2 2-6 7z" fill="#3f78b5" />
              </svg>
            </BigIcon>
            View
            <br />
            Overrides ▾
          </BigTool>
          <TextStack>
            <TextTool><Glyph name="sharpen" /> Sharpen <Caret $ml={3} /></TextTool>
            <TextTool><Glyph name="styles" /> Styles</TextTool>
            <ComboBox><Caret /></ComboBox>
          </TextStack>
        </GroupBody>
        <GroupLabel $dx={2}>Style</GroupLabel>
      </Group>

      <Group $w={34}>
        <GroupBody $pl={0}>
          <BigTool $w={32}>
            <BigIcon>
              <CloseSquare><Glyph name="checkBig" size={12} /></CloseSquare>
            </BigIcon>
            Close
            <br />
            Sketch
          </BigTool>
        </GroupBody>
        <GroupLabel $dx={-1}>Close</GroupLabel>
      </Group>
    </Ribbon>

    <CommandRow>
      <CommandBar>
        {COMMANDS.map(([icon, label, gap]) => (
          <Command key={label} $gap={gap}>
            <Glyph name={icon} />
            {label}
          </Command>
        ))}
      </CommandBar>
      <PlaybackPanel>
        <Glyph name="play" size={11} />
        Feature Playback
        <PanelButtons>
          <Glyph name="min" size={8} />
          <Glyph name="list" size={8} />
          <Glyph name="pin" size={8} />
          <Glyph name="close" size={8} />
        </PanelButtons>
      </PlaybackPanel>
    </CommandRow>

    <Workspace>
      <SideRail $w={17}>
        <Glyph name="railA" size={12} />
        <Glyph name="railB" size={12} />
        <RailTab $side="border-left" $gap={5} $pad="1px 0 17px">
          <Glyph name="parts" size={11} />
          <VerticalLabel $size={6.3}>Family of Parts</VerticalLabel>
        </RailTab>
        <Glyph name="folderBlue" size={12} />
        <Glyph name="railQ" size={12} />
        <Glyph name="railGrid" size={12} />
        <Glyph name="railFlow" size={12} />
        <Glyph name="railOpen" size={12} />
      </SideRail>

      <Center>
        <DocTabs>
          <DocTab>
            <Glyph name="tabSketch" size={8} />
            Part1: Sketch
          </DocTab>
          <DocArrows>
            <span>‹</span>
            <span>›</span>
            <Caret />
          </DocArrows>
        </DocTabs>

        <Canvas>
          <TreePanel>
            <TreeHandle />
            <TreeList>
              {TREE.map((row, i) => (
                <TreeRow key={i} $indent={row.indent}>
                  {row.expand && <Expander />}
                  {row.check && (
                    <CheckBox>
                      <svg viewBox="0 0 6 6" width="5" height="5" aria-hidden="true">
                        <path d="M0.5 3l2 2 3-4" fill="none" stroke="#2f4f7f" strokeWidth="1.2" />
                      </svg>
                    </CheckBox>
                  )}
                  {row.icons && row.icons.map((n) => <Glyph key={n} name={n} size={8} />)}
                  {row.text && <TreeText $bold={row.bold}>{row.text}</TreeText>}
                  {row.ordered && <OrderedBand>Ordered</OrderedBand>}
                </TreeRow>
              ))}
            </TreeList>
          </TreePanel>

          <Drawing>
            <FloatBar>
              <BarButton $w={25} $h={19} $bg="#f3a033" $line="#d98a1f">
                <svg viewBox="0 0 14 20" width="11" height="16" aria-hidden="true">
                  <path d="M2 1v15l4-3 3 6 2-1-3-6h5z" fill="#fff" stroke="#666" />
                </svg>
              </BarButton>
              <BarButton $ml={3} $bg="#dfeaf6" $line="#c3d4e6"><Glyph name="table" size={11} /></BarButton>
              <FenceSelect>Directional Fence <Caret $color="#777" /></FenceSelect>
              <BarButton $ml={3} $w={18} $h={16} $bg="#eef3fa">
                <svg viewBox="0 0 14 14" width="13" height="13" aria-hidden="true">
                  <path d="M2 5v7l2-1.5 1.5 3 1-.5-1.5-3H8z" fill="#fff" stroke="#555" strokeWidth=".7" />
                  <path d="M7 7l6-6" stroke="#e0bb2a" strokeWidth="2" />
                </svg>
              </BarButton>
              <BarButton $ml={1} $w={19} $h={16} $bg="#f9dca2" $line="#f3cd86">
                <svg viewBox="0 0 12 8" width="12" height="8" aria-hidden="true"><path d="M.5.5h11v7H.5z" fill="none" stroke="#d49a2a" strokeDasharray="2 1" /></svg>
              </BarButton>
              <BarButton $w={19} $h={16} $bg="#e9f0f8">
                <svg viewBox="0 0 12 10" width="12" height="10" aria-hidden="true"><path d="M.5.5h5v3h6v6H.5z" fill="none" stroke="#9fb5cf" strokeDasharray="2 1" /></svg>
              </BarButton>
              <BarButton $w={18} $h={16}>
                <svg viewBox="0 0 12 10" width="11" height="9" aria-hidden="true"><path d="M1 5l4-4v2.5h6v3H5V9z" fill="#a3a3a3" /></svg>
              </BarButton>
              <BarButton $w={18} $h={16}>
                <svg viewBox="0 0 12 10" width="11" height="9" aria-hidden="true"><path d="M11 5L7 1v2.5H1v3h6V9z" fill="#a3a3a3" /></svg>
              </BarButton>
              <BarButton $ml={1} $w={18} $h={16}>
                <svg viewBox="0 0 12 12" width="11" height="11" aria-hidden="true"><path d="M0 0h12v12H0z" fill="#8d8d8d" /><path d="M3 6l2 2 4-5" stroke="#fff" strokeWidth="1.4" fill="none" /></svg>
              </BarButton>
              <BarButton $ml={3} $w={18} $h={16}>
                <svg viewBox="0 0 12 12" width="11" height="11" aria-hidden="true"><path d="M0 0h12v12H0z" fill="#444" /><path d="M3 3l6 6M9 3l-6 6" stroke="#fff" strokeWidth="1.6" /></svg>
              </BarButton>
            </FloatBar>
            <AcceptBadge><Glyph name="checkBig" size={10} /></AcceptBadge>
            <Sketch />
            <ContextMenu>
              {MENU.map((m) => (
                <MenuRow key={m.text} $off={m.off} $h={m.h} $rule={m.rule}>
                  <MenuIcon>{m.icon && <Glyph name={m.icon} size={10} />}</MenuIcon>
                  {m.text}
                  {m.hint && <MenuHint>{m.hint}</MenuHint>}
                  {m.more && <MenuArrow />}
                </MenuRow>
              ))}
            </ContextMenu>
            <Pointer viewBox="0 0 12 14" width="12" height="14" aria-hidden="true">
              <circle cx="4.5" cy="4.5" r="3.6" fill="#fff" stroke="#555" />
              <path d="M5 4v8l2-2 1.5 3 1.2-.6L8.2 9.5H11z" fill="#fff" stroke="#444" strokeWidth=".7" />
            </Pointer>
            <ViewCube viewBox="0 0 66 65" width="66" height="65" aria-hidden="true">
              <path d="M.5.5h64v64H.5z" fill="#fff" stroke="#e6e6e6" />
              <path d="M32.5 4V32" stroke="#b5b5d8" />
              <path d="M33 32H61" stroke="#edb0b0" />
              <text x="32.5" y="37" textAnchor="middle" fontFamily="Liberation Sans" fontSize="14" fill="#777">FRONT</text>
            </ViewCube>
            <Logo>
              <LogoMark>ONE<span>PLM</span></LogoMark>
              <LogoTag>Digital Transformation</LogoTag>
            </Logo>
            <Triad viewBox="0 0 36 48" width="36" height="48" aria-hidden="true">
              <path d="M12.5 36V9" stroke="#14148c" strokeWidth="1.6" />
              <path d="M12.5 5l-2.5 9h5z" fill="#14148c" />
              <path d="M14 37.5H33" stroke="#c0322a" strokeWidth="1.6" />
              <circle cx="12.5" cy="37.5" r="2.6" fill="#c8d028" />
              <circle cx="33" cy="37.5" r="1.2" fill="#c0322a" />
              <text x="12.5" y="3.5" textAnchor="middle" fontFamily="Liberation Sans" fontSize="5" fill="#3a3a9a">z</text>
            </Triad>
          </Drawing>
        </Canvas>

        <PromptBar>
          <PromptTag>
            <Glyph name="play" size={11} />
            PromptBar
          </PromptTag>
          <PromptText>
            Click elements, drag right for inside fence; drag left for inside/overlapping fence, or Alt+click to place first vertex of polygon fence. Press Esc to clear the display of keypoints.
          </PromptText>
          <PromptTools>
            <Glyph name="textB" size={8} />
            <Glyph name="textC" size={8} />
            <Glyph name="arrows" size={8} />
            <Glyph name="list" size={8} />
            <Glyph name="pin" size={8} />
            <Glyph name="close" size={8} />
          </PromptTools>
        </PromptBar>
      </Center>

      <SideRail $w={17}>
        <RailTab $side="border-right" $gap={2} $pad="0 0 3px">
          <Glyph name="table" size={11} />
          <VerticalLabel $size={8}>Layers</VerticalLabel>
        </RailTab>
      </SideRail>
    </Workspace>

    <StatusBar>
      <StatusText>0 items are selected</StatusText>
      <FindInput>Find a command</FindInput>
      <StatusIcons>
        <Glyph name="statArrow" size={9} />
        <Glyph name="statSheet" size={9} />
        <Glyph name="statZoom" size={9} />
        <Glyph name="statZoom" size={9} />
        <Glyph name="statFit" size={9} />
        <Glyph name="statSheet" size={9} />
        <Glyph name="statBlue" size={9} />
        <Glyph name="statGreen" size={9} />
        <Glyph name="statYellow" size={9} />
        <Glyph name="statMinus" size={8} />
        <ZoomTrack />
        <Glyph name="statPlus" size={8} />
        <Glyph name="statRecord" size={8} />
        <Glyph name="statRecord" size={8} />
        <Glyph name="statPerson" size={9} />
      </StatusIcons>
    </StatusBar>
  </Page>
);

export default App;
